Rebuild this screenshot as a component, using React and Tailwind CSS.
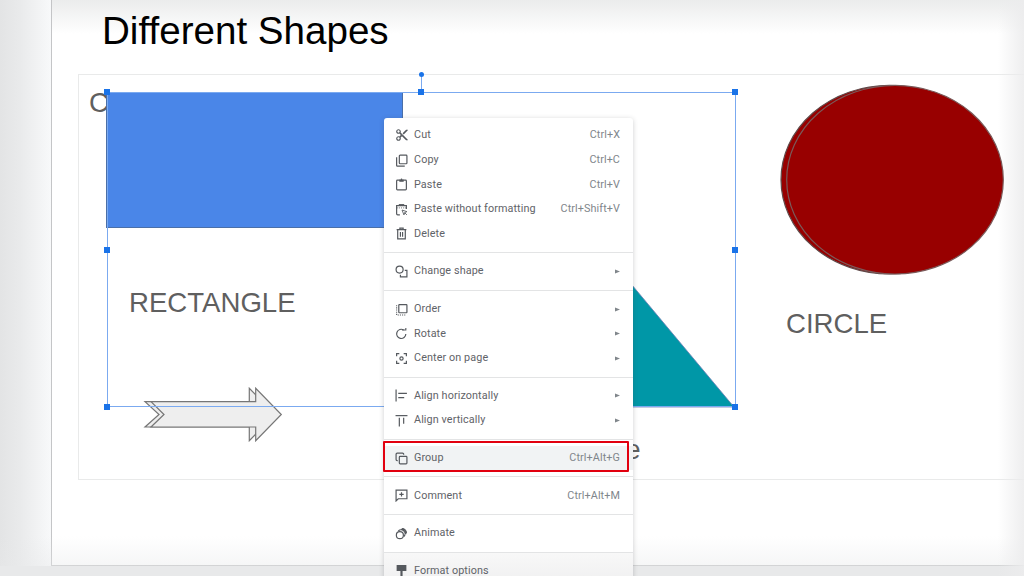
import React from "react";
import { MdContentCut } from "react-icons/md";

const S = ({ children }) => (
  <svg viewBox="0 0 24 24" className="w-[13px] h-[13px]" fill="none" stroke="#55595e" strokeWidth="2.200">
    {children}
  </svg>
);

const icons = {
  cut: <MdContentCut className="w-[14px] h-[14px] text-[#55595e]" />,
  copy: (
    <S>
      <rect x="8" y="2" width="14" height="16" rx="1.5" />
      <path d="M3 6v15a1.5 1.5 0 0 0 1.500 1.500H18" />
    </S>
  ),
  paste: (
    <S>
      <rect x="3" y="4" width="18" height="18" rx="1.500" />
      <path d="M8 5h8" strokeWidth="4" />
      <path d="M12 1v3" />
    </S>
  ),
  pasteplain: (
    <S>
      <path d="M9 22H5a2 2 0 0 1-2-2V5h18v6" />
      <path d="M7 3.500h10" strokeWidth="3" />
      <path d="M3 9h18" strokeDasharray="2 2" strokeWidth="1.500" />
      <path d="M13 13l9 3-4 1.500-1.500 4.500zM18 18l4 4" strokeWidth="1.600" />
    </S>
  ),
  trash: (
    <S>
      <path d="M3 5h18M9 5V2h6v3" />
      <path d="M5 5v17h14V5" />
      <path d="M10 9v9M14 9v9" />
    </S>
  ),
  shape: (
    <S>
      <circle cx="8.500" cy="8.500" r="6.500" />
      <path d="M18 10h4v12H10v-4" />
    </S>
  ),
  order: (
    <S>
      <rect x="7" y="3" width="15" height="15" rx="1" />
      <path d="M3 4v18h18" strokeDasharray="2 2" strokeWidth="2" />
    </S>
  ),
  rotate: (
    <S>
      <path d="M16 5.500A8.500 8.500 0 1 0 20 13" />
      <path d="M13 5.500h7V2" strokeWidth="2" />
    </S>
  ),
  center: (
    <S>
      <path d="M3 8V3h5M16 3h5v5M21 16v5h-5M8 21H3v-5" />
      <circle cx="12" cy="12" r="3" />
    </S>
  ),
  alignh: (
    <S>
      <path d="M2 1v22" />
      <path d="M6 8h16M6 16h11" />
    </S>
  ),
  alignv: (
    <S>
      <path d="M1 3h22" />
      <path d="M8 7v16M16 7v11" />
    </S>
  ),
  group: (
    <S>
      <rect x="8" y="8" width="14" height="14" rx="1.500" />
      <path d="M16 5V4a2 2 0 0 0-2-2H4a2 2 0 0 0-2 2v10a2 2 0 0 0 2 2h1" />
    </S>
  ),
  comment: (
    <S>
      <path d="M2 2h20v16H6l-4 4z" />
      <path d="M12 6v8M8 10h8" />
    </S>
  ),
  animate: (
    <S>
      <circle cx="9" cy="15" r="6.500" />
      <path d="M6 7.500A7 7 0 0 1 16.500 17.500M10.500 4.500A7 7 0 0 1 20 13" />
      <path d="M13 3a8 8 0 0 1 8 8" />
    </S>
  ),
  format: (
    <svg viewBox="0 0 24 24" className="w-[13px] h-[13px]" fill="#55595e">
      <path d="M3 2h18v11H14v9h-4v-9H3z" />
    </svg>
  ),
};

const sections = [
  [
    ["cut", "Cut", "Ctrl+X"],
    ["copy", "Copy", "Ctrl+C"],
    ["paste", "Paste", "Ctrl+V"],
    ["pasteplain", "Paste without formatting", "Ctrl+Shift+V"],
    ["trash", "Delete", ""],
  ],
  [["shape", "Change shape", ">"]],
  [
    ["order", "Order", ">"],
    ["rotate", "Rotate", ">"],
    ["center", "Center on page", ">"],
  ],
  [
    ["alignh", "Align horizontally", ">"],
    ["alignv", "Align vertically", ">"],
  ],
  [["group", "Group", "Ctrl+Alt+G"]],
  [["comment", "Comment", "Ctrl+Alt+M"]],
  [["animate", "Animate", ""]],
  [["format", "Format options", ""]],
];

function Row({ icon, label, right }) {
  const active = label === "Group";
  return (
    <div
      className={
        "flex items-center h-[24.6px] pl-[10.5px] pr-[12.5px] " +
        (active ? "bg-[#f1f3f4]" : "")
      }
    >
      <span className="w-[14px] h-[14px] flex items-center justify-center shrink-0">{icons[icon]}</span>
      <span className="ml-[5.5px] flex-1 text-[#5f6368]">{label}</span>
      {right === ">" ? (
        <svg viewBox="0 0 5 5" className="w-[5px] h-[5px]" fill="#80868b">
          <path d="M0 .5L5 2.500 0 4.500z" />
        </svg>
      ) : (
        <span className="text-[#80868b]">{right}</span>
      )}
    </div>
  );
}

const handles = [
  [107, 92],
  [421, 92],
  [735, 92],
  [107, 250],
  [735, 250],
  [107, 407],
  [421, 407],
  [735, 407],
];

const Arrow = ({ d }) => (
  <path d={d} fill="#eeeeee" stroke="#767676" strokeWidth="1.200" strokeLinejoin="miter" />
);

export default function App() {
  return (
    <div className="relative w-[1024px] h-[576px] overflow-hidden bg-[linear-gradient(90deg,#e3e4e5_0px,#e9eaeb_20px,#f8f9fa_51px)] font-['Liberation_Sans',sans-serif]">
      {/* Slide */}
      <div className="ml-[51px] w-[973px] h-[566px] pt-[74px] pl-[25.5px] border-l border-b border-[#c4c5c7] bg-[linear-gradient(180deg,#ebecec_0px,#ffffff_34px,#ffffff_100%)]">
        <div className="h-[406px] border border-r-0 border-[#e9eaea]" />
      </div>
      <div className="absolute left-0 right-0 bottom-0 h-[10px] bg-[#e8e9ea]" />
      <div className="absolute left-0 right-0 top-[536px] h-[40px] bg-[linear-gradient(180deg,rgba(232,233,234,0),rgba(232,233,234,0.55))]" />
      <div className="absolute right-0 top-0 bottom-0 w-[26px] bg-[linear-gradient(90deg,rgba(236,236,237,0),rgba(236,236,237,0.9))]" />

      {/* Canvas objects */}
      <div className="absolute left-[102px] top-[8px] text-[38.6px] leading-[46px] text-black whitespace-nowrap">
        Different Shapes
      </div>
      <div className="absolute left-[89px] top-[87px] text-[27.6px] leading-[32px] text-[#5f5f5f]">C</div>
      <div className="absolute left-[106px] top-[92px] w-[297px] h-[136px] bg-[#4a86e8] border border-[#4a6fa8]" />
      <div className="absolute left-[129px] top-[287px] text-[27.6px] leading-[32px] text-[#5f5f5f]">RECTANGLE</div>
      <div className="absolute left-[786px] top-[308px] text-[27.6px] leading-[32px] text-[#5f5f5f]">CIRCLE</div>
      <div className="absolute left-[542px] top-[434px] text-[27.6px] leading-[32px] text-[#5f5f5f]">Triangle</div>

      <svg className="absolute left-0 top-0" width="1024" height="576" viewBox="0 0 1024 576">
        <path d="M530 163L734 407H530z" fill="#0097a7" stroke="#6f7fb5" strokeWidth="0.800" />
        <ellipse cx="889.500" cy="179.700" rx="108.500" ry="94.300" fill="#980000" stroke="#5f4a4a" strokeWidth="1.200" />
        <ellipse cx="895" cy="179.700" rx="108.300" ry="94.300" fill="#980000" stroke="#7a5a5a" strokeWidth="1.200" />
        <Arrow d="M145 401.700H249.300V388.300L275 414.500 249.300 440.700V427H145L159 414.500z" />
        <Arrow d="M151 401.700H255.700V388.300L281.300 414.500 255.700 440.700V427H151L164 414.500z" />
      </svg>

      {/* Selection */}
      <div className="absolute left-[106.500px] top-[92px] w-[629px] h-[315px] border border-[#7baaf0]" />
      <div className="absolute left-[420.500px] top-[74px] w-px h-[18px] bg-[#7baaf0]" />
      <div className="absolute left-[418.500px] top-[72px] w-[5px] h-[5px] rounded-full bg-[#1a73e8]" />
      {handles.map(([x, y]) => (
        <div
          key={x + "-" + y}
          className="absolute w-[6px] h-[6px] bg-[#1a73e8] -ml-[3px] -mt-[3px]"
          style={{ left: x, top: y }}
        />
      ))}

      {/* Context menu */}
      <div className="absolute left-[384px] top-[118px] w-[248.500px] pt-[5.200px] bg-white rounded-[3px] shadow-[0_1px_5px_rgba(60,64,67,0.25)] text-[10.800px] font-['Roboto',sans-serif] tracking-[0.1px]">
        {sections.map((rows, i) => (
          <div
            key={i}
            className={
              (i ? "border-t border-[#e3e4e5] mt-[6px] pt-[6px] " : "") +
              (i === sections.length - 1 ? "h-[40px] bg-[linear-gradient(180deg,#f8f8f8,#ededee)]" : "")
            }
          >
            {rows.map(([icon, label, right]) => (
              <Row key={label} icon={icon} label={label} right={right} />
            ))}
          </div>
        ))}
      </div>
      <div className="absolute left-[382.500px] top-[441px] w-[246px] h-[31px] border-[2.500px] border-[#e2000f] rounded-[1px]" />
    </div>
  );
}
